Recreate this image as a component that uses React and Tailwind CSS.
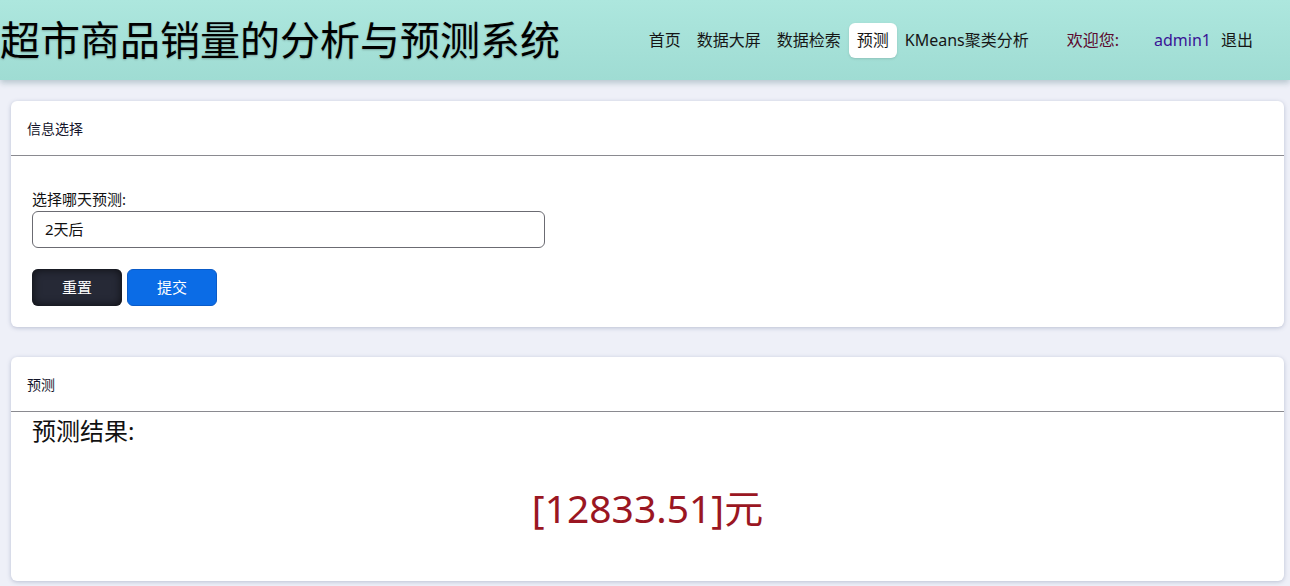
import React from 'react';

const font = { fontFamily: '"Noto Sans", "Noto Sans CJK SC", sans-serif' };

const navItems = ['首页', '数据大屏', '数据检索', '预测', 'KMeans聚类分析'];

const Header = () => (
  <header className="h-20 flex items-center justify-between bg-gradient-to-b from-[#ade7de] to-[#9fdcd3] shadow-[0_3px_6px_rgba(80,120,130,0.35)]">
    <h1 className="text-[40px] leading-none text-black [text-shadow:0_1px_2px_rgba(0,0,0,0.25)]">
      超市商品销量的分析与预测系统
    </h1>
    <nav className="flex items-center mr-[37px] text-[16px] text-[#161616]">
      {navItems.map((item) => (
        <a
          key={item}
          className={
            item === '预测'
              ? 'px-2 h-[35px] flex items-center bg-white rounded-md shadow-sm'
              : 'px-2 h-[35px] flex items-center'
          }
        >
          {item}
        </a>
      ))}
      <span className="ml-[30px] text-[#5c0a2e]">欢迎您:</span>
      <span className="ml-[35px] text-[#3a1496]">admin1</span>
      <span className="ml-[10px]">退出</span>
    </nav>
  </header>
);

const Card = ({ title, children, className = '' }) => (
  <section className={`bg-white rounded-md shadow-[0_1px_4px_rgba(90,100,140,0.35)] ${className}`}>
    <div className="h-[55px] flex items-center px-4 border-b border-[#8a8a90]">
      <h2 className="text-[14px] text-[#14152b]">{title}</h2>
    </div>
    {children}
  </section>
);

export default function App() {
  return (
    <div style={font} className="min-h-[586px] bg-[#eef0f8]">
      <Header />
      <main className="pt-[21px] pl-[11px] pr-[6px] pb-1 flex flex-col gap-[30px]">
        <Card title="信息选择">
          <div className="px-[21px] pt-[33px] pb-[21px]">
            <label className="block text-[15px] text-[#111] leading-5 mb-[2px]">选择哪天预测:</label>
            <div className="w-[513px] h-[37px] rounded-md border border-[#6b6b72] flex items-center px-3 text-[15px] text-[#111]">
              2天后
            </div>
            <div className="flex gap-[5px] mt-[21px]">
              <button className="w-[90px] h-[37px] rounded-md bg-[#262936] shadow-[inset_0_0_10px_rgba(0,0,0,0.7)] text-white text-[15px]">
                重置
              </button>
              <button className="w-[90px] h-[37px] rounded-md bg-[#0b6ce6] border border-[#0a5bc8] text-white text-[15px]">
                提交
              </button>
            </div>
          </div>
        </Card>
        <Card title="预测" className="h-[224px]">
          <div className="px-[21px] pt-[3px]">
            <p className="text-[24px] leading-8 text-[#111]">预测结果:</p>
            <p className="text-center text-[39px] text-[#9a1622] mt-[41px] leading-none">[12833.51]元</p>
          </div>
        </Card>
      </main>
    </div>
  );
}
